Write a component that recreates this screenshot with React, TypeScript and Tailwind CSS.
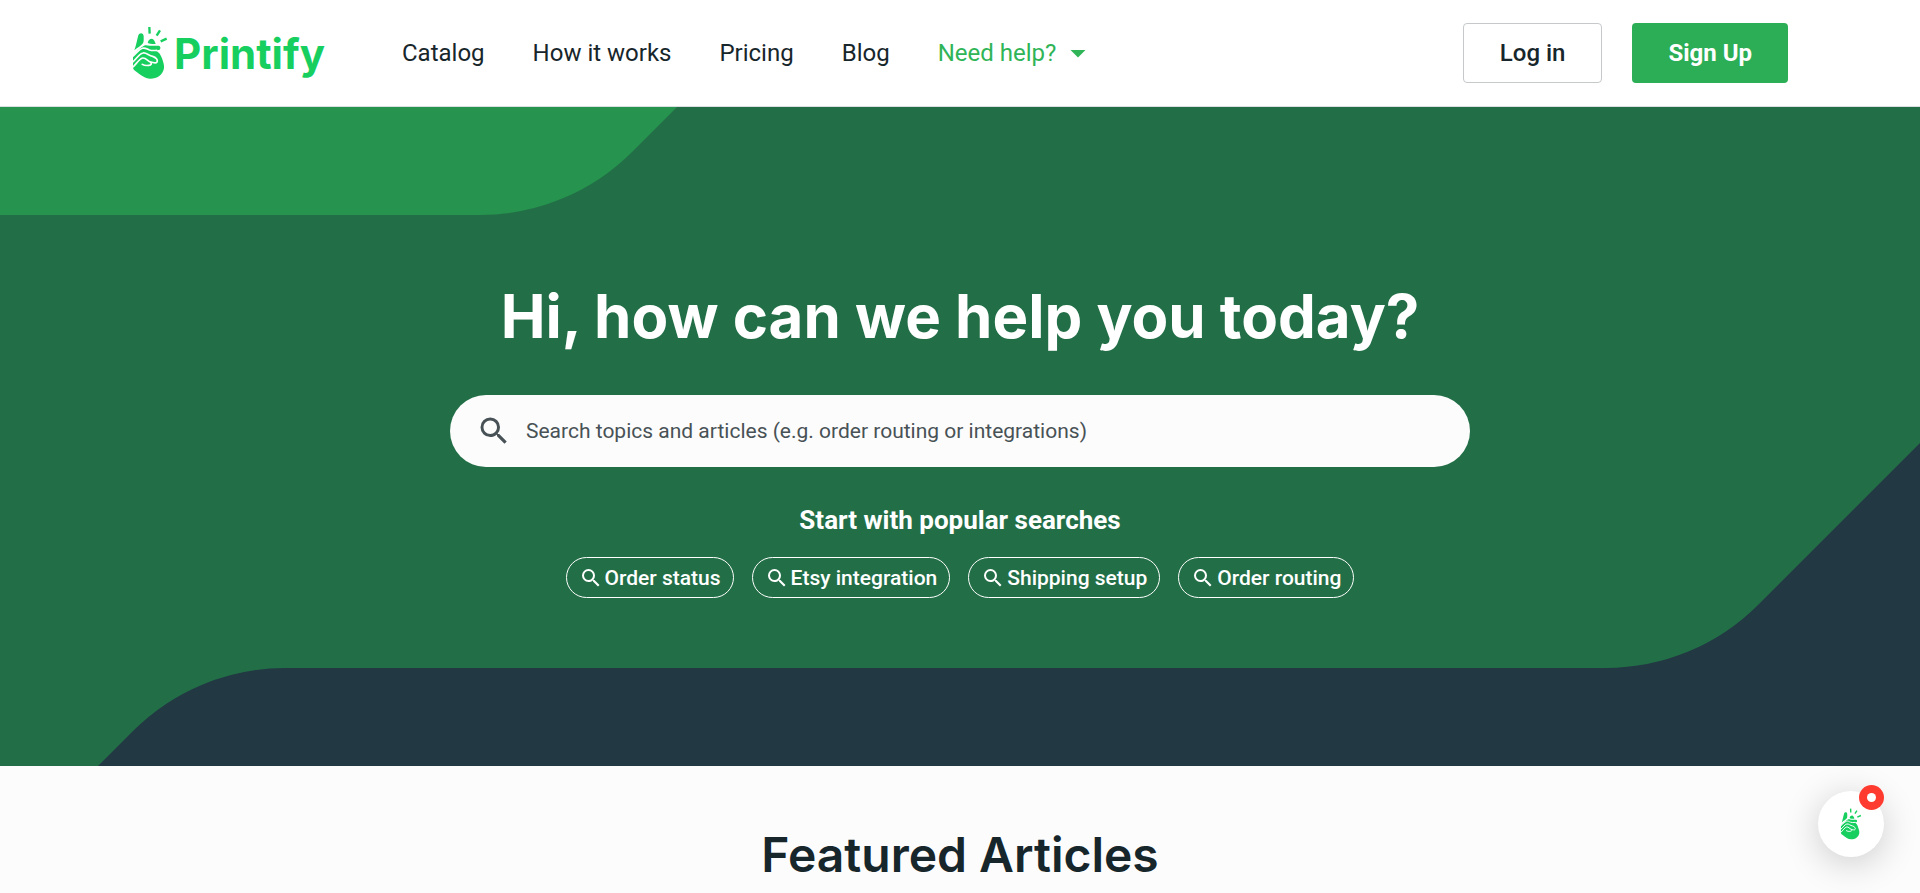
import { MdArrowDropDown, MdSearch } from "react-icons/md";

const navLinks = ["Catalog", "How it works", "Pricing", "Blog"];

const popularSearches = [
  "Order status",
  "Etsy integration",
  "Shipping setup",
  "Order routing",
];

function HandIcon({ className }: { className?: string }) {
  return (
    <svg viewBox="34 30 108 162" fill="none" aria-hidden="true" className={className}>
      {/* Rays */}
      <g stroke="#17CF5F" strokeWidth="7">
        <path d="M86 33l1 20M118 43l-10 16M138 68l-18 8" />
      </g>
      {/* Fingers */}
      <g fill="#17CF5F">
        <path d="M41 103C46 90 49 72 53 58C56 49 69 50 69 61C69 69 70 76 67 82C61 90 51 94 41 103Z" />
        <path d="M81 80C83 72 88 68 93 68C99 69 103 76 105 84C97 85 87 84 81 80Z" />
        <path d="M37 119C47 109 57 95 70 89C76 86 80 88 87 89H114C121 90 121 102 113 102L106 104C116 109 120 116 124 127C128 139 131 147 130 156C127 177 109 188 89 188C72 188 61 177 44 165C38 161 36 157 37 151Z" />
      </g>
      {/* Knuckle lines */}
      <g stroke="#fff" strokeWidth="5" strokeLinecap="round" strokeLinejoin="round">
        <path d="M36 121C46 113 54 101 65 97C73 94 78 99 86 102C93 104 100 104 108 103" />
        <path d="M36 138C48 129 55 113 67 111C77 109 84 119 96 121C106 124 112 132 109 138C105 144 98 139 91 138" />
        <path d="M37 153C47 144 55 129 66 126C76 125 80 134 89 138C94 142 92 148 85 148C77 149 71 149 65 145" />
      </g>
    </svg>
  );
}

function Header() {
  return (
    <header className="border-b border-[#dcdfe0] bg-white">
      <div className="mx-auto flex h-[106px] max-w-[1656px] items-center">
        <a href="#" className="flex w-[195px] items-center" aria-label="Printify">
          <HandIcon className="h-[54px] w-9 shrink-0" />
          <span className="ml-1.5 font-['Inter','Liberation_Sans',sans-serif] text-[42px] font-bold text-[#17CF5F]">
            Printify
          </span>
        </a>

        <nav className="ml-[75px] flex items-center gap-12 text-2xl text-[#17262b]">
          {navLinks.map((link) => (
            <a key={link} href="#">
              {link}
            </a>
          ))}
          <button type="button" className="flex items-center gap-1 text-[#2fb457]">
            Need help?
            <MdArrowDropDown size={36} />
          </button>
        </nav>

        <div className="ml-auto flex items-center gap-[30px] text-2xl">
          <button
            type="button"
            className="h-15 rounded border border-[#c5c9ca] px-9 font-medium text-[#17262b]"
          >
            Log in
          </button>
          <button type="button" className="h-15 rounded bg-[#2bae55] px-9 font-bold text-white">
            Sign Up
          </button>
        </div>
      </div>
    </header>
  );
}

function Hero() {
  return (
    <section className="relative overflow-hidden bg-[#226f47] pt-[173px] pb-[168px] text-white">
      {/* Background shapes */}
      <svg
        viewBox="0 0 1920 659"
        preserveAspectRatio="xMidYMid slice"
        aria-hidden="true"
        className="absolute inset-0 h-full w-full"
      >
        <path d="M0 0H677L632 45A215 215 0 0 1 480 108H0Z" fill="#26934e" />
        <path
          d="M98 659L133 624A215 215 0 0 1 285 561H1606A215 215 0 0 0 1758 498L1920 336V659Z"
          fill="#223843"
        />
      </svg>

      <div className="relative mx-auto flex max-w-[1020px] flex-col items-center">
        <h1 className="font-['Inter','Liberation_Sans',sans-serif] text-6xl leading-[72px] font-bold whitespace-nowrap">
          Hi, how can we help you today?
        </h1>

        <label className="mt-[43px] flex h-[72px] w-full items-center rounded-full bg-[#fcfcfc] pr-9 pl-[26px] text-[#485256]">
          <MdSearch size={36} />
          <input
            type="search"
            aria-label="Search"
            placeholder="Search topics and articles (e.g. order routing or integrations)"
            className="ml-3.5 h-full flex-1 bg-transparent text-[21px] outline-none placeholder:text-[#485256]"
          />
        </label>

        <h2 className="mt-[37px] text-[26px] leading-8 font-bold">Start with popular searches</h2>
        <div className="mt-[21px] flex gap-[18px]">
          {popularSearches.map((search) => (
            <button
              key={search}
              type="button"
              className="flex h-[41px] items-center rounded-full border border-white px-3 text-[21px] leading-[38px] font-medium"
            >
              <MdSearch size={24} className="mr-0.5" />
              {search}
            </button>
          ))}
        </div>
      </div>
    </section>
  );
}

function ChatButton() {
  return (
    <button
      type="button"
      aria-label="Open chat"
      className="fixed right-9 bottom-9 flex size-[66px] items-center justify-center rounded-full bg-white shadow-[0_6px_36px_rgba(0,0,0,0.2)]"
    >
      <HandIcon className="h-8 w-[22px]" />
      <span className="absolute -top-1.5 right-0 flex size-[25px] items-center justify-center rounded-full bg-[#ff3b30]">
        <span className="size-[9px] rounded-full bg-white" />
      </span>
    </button>
  );
}

export default function App() {
  return (
    <div className="min-h-screen bg-[#fcfcfc] font-['Roboto','Liberation_Sans',sans-serif]">
      <Header />
      <main>
        <Hero />
        <section className="pt-[61px] text-center">
          <h2 className="font-['Inter','Liberation_Sans',sans-serif] text-5xl leading-[56px] font-semibold text-[#17262b]">
            Featured Articles
          </h2>
        </section>
      </main>
      <ChatButton />
    </div>
  );
}
